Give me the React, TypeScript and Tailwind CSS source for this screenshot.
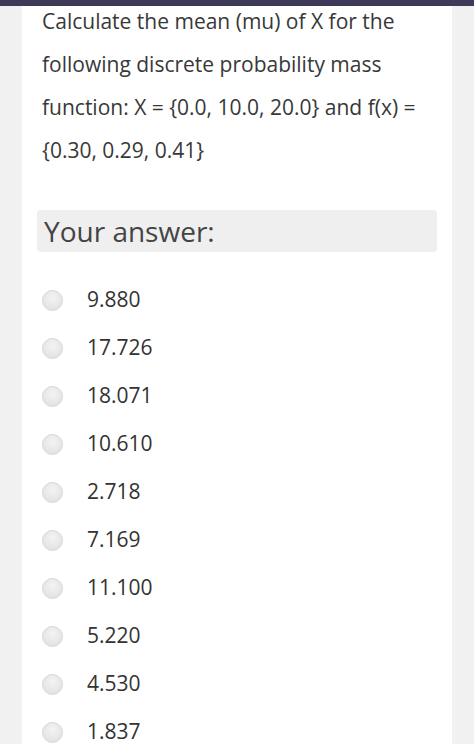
import React from 'react';

const QUESTION =
  'Calculate the mean (mu) of X for the following discrete probability mass function: X = {0.0, 10.0, 20.0} and f(x) = {0.30, 0.29, 0.41}';

const OPTIONS = ['9.880', '17.726', '18.071', '10.610', '2.718', '7.169', '11.100', '5.220', '4.530', '1.837'];

function Radio() {
  return (
    <span
      className="block h-[21px] w-[21px] shrink-0 rounded-full border border-[#d6d6d6]"
      style={{ background: 'radial-gradient(circle at 50% 35%, #f3f3f3, #dedede)' }}
    />
  );
}

export default function App() {
  return (
    <div
      className="h-[744px] w-[474px] overflow-hidden bg-[#f1f1f1] text-[#333]"
      style={{ fontFamily: '"Open Sans", "Noto Sans", sans-serif' }}
    >
      <div className="relative z-10 h-[6px] bg-[#3d3a58]" />
      <div className="mx-[22px] flow-root h-full bg-white">
        <p className="relative z-20 -mt-[6px] px-[20px] text-[21px] leading-[43px] text-[#383838]">{QUESTION}</p>

        <div className="mx-[15px] mt-[38px] flex h-[42px] items-center rounded-[4px] bg-[#efefef] px-[7px] text-[28px] text-[#444]">
          Your answer:
        </div>

        <ul className="mt-[24px] px-[20px]">
          {OPTIONS.map((o) => (
            <li key={o} className="flex h-[48px] items-center gap-[24px]">
              <Radio />
              <span className="text-[21px] text-[#333]">{o}</span>
            </li>
          ))}
        </ul>
      </div>
    </div>
  );
}
